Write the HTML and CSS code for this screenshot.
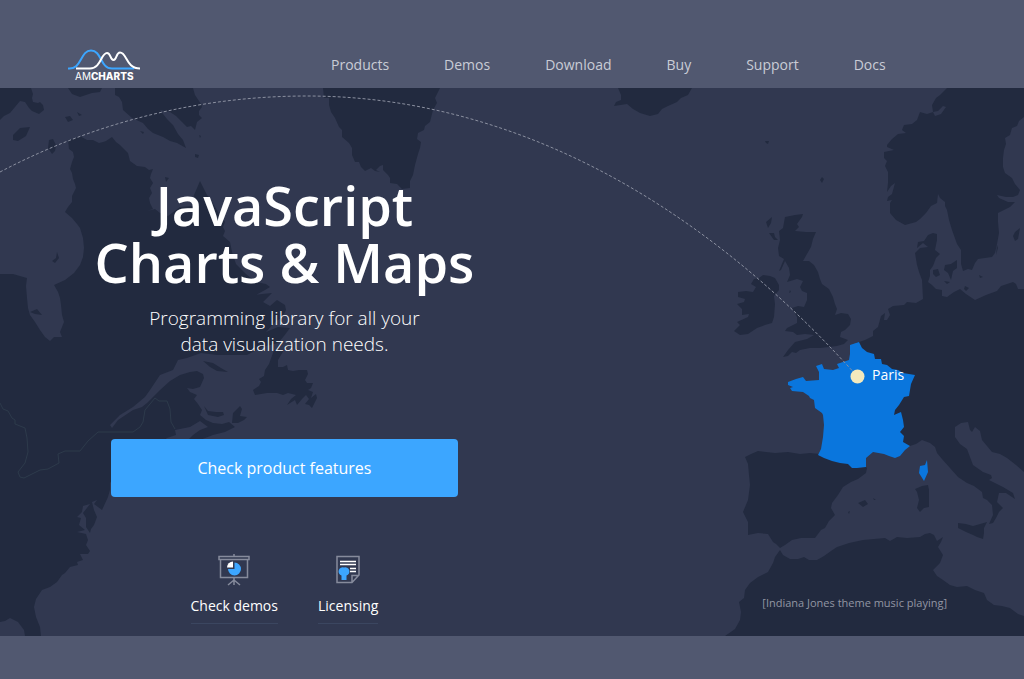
FILE: index.html
```html
<!DOCTYPE html>
<html lang="en">
<head>
  <meta charset="UTF-8">
  <meta name="viewport" content="width=device-width, initial-scale=1.0">
  <title>amCharts: JavaScript Charts &amp; Maps</title>
  <link rel="stylesheet" href="styles.css">
</head>
<body>
  <header class="header">
    <a class="logo" href="#" aria-label="amCharts">
      <svg width="72" height="36" viewBox="68 47 72 36">
        <path class="logo-blue" d="M68 68.500C82 70 80 50.500 91 50.500S100 68.500 112 68.500H134"/>
        <path class="logo-white" d="M76 68.500H90C101 68.500 101 53 107 53C111 53 110 60 113.500 60S116 52.500 120 52.500C127 52.500 126 68.500 140 68.500"/>
        <text x="75" y="80" class="logo-text">AM<tspan class="logo-bold">CHARTS</tspan></text>
      </svg>
    </a>
    <nav class="nav">
      <a href="#">Products</a>
      <a href="#">Demos</a>
      <a href="#">Download</a>
      <a href="#">Buy</a>
      <a href="#">Support</a>
      <a href="#">Docs</a>
    </nav>
  </header>

  <main class="hero">
    <svg class="map" viewBox="0 88 1024 548" preserveAspectRatio="xMidYMid slice">
      <g class="land">
        <!-- Arctic islands -->
        <path d="M0 88H31L33 94L32 98L33 102L38 103L40 102L43 105L44 110L39 114L32 111L29 108L25 102L20 101L15 107L10 113L4 116L0 120Z"/>
        <path d="M13 135L20 128L30 127L26 136L18 141L13 140Z"/>
        <path d="M68 88H102L100 92L92 93L80 97L72 94Z"/>
        <path d="M115 88H193L195 95L201 104L202 107L199 111L199 115L202 118L197 122L195 130L191 126L187 127L182 122L176 116L170 112L160 110L167 119L173 125L178 134L183 140L186 148L177 143L170 141L163 137L153 133L148 129L143 123L132 118L123 110L122 102L119 97L115 95Z"/>
        <path d="M65 117L70 116L73 120L68 122ZM77 112L82 115L79 116ZM49 140L53 139L56 145L55 151L52 154L48 148ZM140 131L144 132L143 134ZM195 154L199 155L198 158L195 157ZM199 135L201 136L200 138ZM165 177L169 178L166 182ZM57 252L59 258L55 263L52 261L56 258Z"/>
        <!-- North America -->
        <path d="M68 140L74 139L80 136L87 140L93 140L99 143L103 142L106 141L112 137L116 142L120 145L128 153L130 161L137 166L145 167L149 170L153 169L151 174L150 178L153 183L150 188L152 193L149 198L150 203L153 209L147 211L155 209L160 213L168 216L180 207L192 206L194 195L200 181L207 195L211 200L218 212L225 222L223 227L225 231L223 236L230 242L232 252L236 264L246 274L256 282L266 284L270 287L265 290L252 297L243 307L245 300L254 295L262 294L272 293L263 302L270 306L277 300L285 305L286 310L282 318L276 321L266 332L278 327L290 328L284 336L278 343L262 347L247 355H217L201 353L187 358L178 360L173 370L160 375L150 390L145 397L133 407L120 415L110 425L112 428L118 420L133 410L142 407L147 403L160 390L170 381L180 375L190 372L197 371L203 374L204 378L200 387L193 389L187 388L190 392L197 395L194 399L198 404L202 410L200 415L206 420L213 423L222 424L229 422L235 427L225 432L213 435L200 440L188 440L193 435L200 430L208 427L200 421L190 427L175 430L176 435L167 438L150 453L130 464L115 474L110 483L110 490L108 497L102 510L98 507L94 504L97 500L92 502L94 510L97 517L94 525L91 529L90 533L86 527L86 518L83 513L90 504L83 506L82 512L77 517L81 518L79 525L85 530L77 532L86 534L88 540L86 545L90 551L88 554L80 554L83 560L77 562L78 565L70 567L65 573L62 575L57 582L50 587L42 590L36 599L34 607L36 617L40 627L41 636H25L24 630L18 622L10 618L5 621L0 622V274L7 274L13 274L20 276L27 278L26 286L27 298L28 308L30 315L35 322L40 330L45 337L50 341L54 337L62 337L60 332L64 322L62 315L61 305L60 298L58 292L54 285L65 280L74 273L80 265L83 257L84 248L83 238L80 228L77 224L72 218L65 212L68 207L72 202L72 196L76 188L75 184L73 179L72 173L70 169L72 162L74 157L73 152L69 149Z"/>
        <path d="M30 312L37 309L42 315L35 314ZM203 361L213 363L221 368L228 372L217 371L210 367ZM204 406L208 411L216 412L223 412L224 415L218 417L208 415ZM240 406L242 409L240 416L247 417L244 420L238 423L232 423L233 413Z"/>
        <!-- Newfoundland -->
        <path d="M274 350L284 350L278 360V367L283 367L287 365L288 370L293 371L299 370L307 370L308 374L305 380L307 383L313 383L311 388L308 390L313 392L311 398L316 394L317 398L315 402L312 408L309 405L305 404L309 399L306 395L302 399L297 405L295 400L287 405L291 399L296 395L288 393L283 395L277 393L267 393L255 395L253 390L259 386L261 382L259 379L264 376L265 370L269 364Z"/>
        <!-- Greenland and Iceland -->
        <path d="M323 88H440L435 98L437 103L433 110L430 122L425 126L424 130L418 133L417 139L421 142L420 148L418 154L415 165L413 175L410 181V188L402 189L397 184L390 183V178L388 175L383 170V165L380 166L376 170L380 172L375 171L371 168L365 171L361 167L359 162L355 162L352 155V148L349 143L342 137V130L339 127L335 118L331 112L329 105V98L324 98Z"/>
        <path d="M618 88H692L688 95L681 98L677 102L668 106L662 109L658 114L650 116L640 113L633 109L627 104L614 106L616 102L621 100L621 95Z"/>
        <path d="M765 141L769 141L768 144L766 143ZM822 177L824 179L822 183L820 180Z"/>
        <!-- Scandinavia -->
        <path d="M947 88H1024V117L1019 121L1017 126L1012 128L1010 135L1005 138L1006 144L1004 150L1003 158L1003 167L1005 173L1012 178L1015 184L1020 190L1018 195L1013 197L1006 197L997 195L999 198L1008 202H1015L1010 207L998 213V222L999 233L997 244L995 253L992 257L978 259L975 263L972 270L968 269L963 271L961 264L961 250L957 244L952 230L949 220L947 210L945 206V202L940 198L938 194L937 203L931 206L926 213L920 219L916 222L905 225L896 220L890 213V203L892 200L887 201L888 197L892 194L895 183L891 186L887 192L888 183L888 172L885 166L887 161L884 158L884 152L894 150L887 147L887 145L892 139L898 134L906 133L902 130L904 125L912 124L917 120L920 112L927 114L933 112L935 116L941 114L946 107L943 106L938 111L933 112L932 105L936 98L940 95Z"/>
        <!-- Mainland Europe -->
        <path d="M933 233L937 234L937 240L935 250L940 254L936 258L933 266L930 270V276L928 282L932 285L936 289L942 290V296L947 297L954 292L960 289L966 294L975 300L986 295L997 291L1001 286L1013 282L1016 284L1018 289L1024 289V472L1016 465L1007 458L1000 454L992 452L987 446L982 440L980 431L975 427L972 432L970 430L968 422L961 423L955 427V437L960 444L967 449L973 465L983 472L991 475L992 478L989 480L1003 487L1013 493L1015 499L1006 493H999L997 502L1003 508L999 512L996 518L993 523L989 524L993 515L992 505L987 500L983 498L982 492L974 486L967 483L958 477L950 468L942 459L937 453L935 447L930 443L922 440L916 444L910 446L895 452L872 448L860 460L867 468L866 473L858 479L851 482L843 487L838 495L832 503L831 508L835 515L829 521L825 528L821 530L815 538L801 538L792 540L785 545L780 548L776 544L773 542L768 534L758 533L748 535V522L743 512L748 500L750 485L749 475L748 464L745 457L751 454L758 451L766 452L775 453L788 452L800 454L810 453L820 454L850 430L858 380L856 343L865 340L873 336L873 331L878 327L881 316L885 313L884 320L887 320L890 315L888 309L893 306L904 305L907 302L916 303L923 299L922 280L919 272L917 265L915 253L920 248L928 247L923 243L917 248L918 242L924 241L928 235Z"/>
        <path d="M933 270L938 269L940 275L936 277L933 274ZM945 265L951 264L957 260V268L953 271L951 280L948 273L944 270ZM944 281L950 282L947 284ZM965 286L969 288L966 291L964 289ZM979 275L983 277L980 278ZM1015 232L1020 228L1018 239L1015 241L1013 236ZM997 245L998 248L996 255Z"/>
        <!-- Britain and Ireland -->
        <path d="M785 217L795 215L803 214L802 217L797 224L799 227L795 231L806 232L816 232L813 239L811 247L807 254L803 261L809 261L814 265L818 272L820 279L822 284L829 289L833 297L835 304L837 309L835 315L841 313L848 314L851 319L850 325L845 330L841 332L840 337L848 340L844 344L837 346L829 347L820 348L810 348L800 350L796 353L792 352L788 356L783 357L788 350L795 342L807 339L814 335L805 334L797 335L793 332L785 331L787 328L797 323L797 317L792 308L798 306L804 307L807 300V293L802 291L800 287L803 281L797 279L787 282L790 275L789 268L785 261L781 270L779 271L784 259L779 256L778 248L780 240L779 231L783 228Z"/>
        <path d="M766 222L772 217L771 223L768 228ZM769 233L774 233L775 237L778 240L774 240ZM763 275L770 276L775 278L779 285L779 290L774 296L775 304L774 317L772 323L765 325L757 328L748 334L740 335L734 331L740 325L737 322L748 317L749 314L742 315V309L737 304L744 302L745 299L738 297V292L746 291L753 292L756 287L751 284L754 279L759 278ZM790 290L791 292L789 293Z"/>
        <!-- Mediterranean islands -->
        <path d="M915 489L922 486L928 485L929 490V507L924 508L920 512L917 508L919 500L917 492ZM858 503L865 500L868 504L863 507ZM848 512L850 511L849 514ZM873 498L876 500L874 500ZM958 523L966 524L973 526L987 522L984 528L984 533L983 539L977 537L973 535L966 532L958 528Z"/>
        <!-- North Africa -->
        <path d="M780 550L783 555L790 559L798 559L804 557L809 560L817 560L824 556L831 551L837 547L849 543L863 540L874 539L885 538L890 541L897 537L907 538L920 537L925 534L930 533L934 535L937 541L943 537L941 542L938 547L943 555L940 563L933 570L937 576L943 580L950 585L957 587L967 586L975 590L984 593L987 600L994 605L1002 606L1010 608L1018 614L1024 616V636H725L735 629L740 620L741 612L739 602L744 598L745 590L750 583L758 577L768 572L773 563L775 557Z"/>
      </g>
      <path class="border" d="M0 403L3 409L8 411L12 418L15 420V424L25 428L27 438L28 452L25 463L18 472L20 477L24 478L40 470L48 469L59 463L58 454L65 451L80 451L88 441L98 432H133L140 427L143 422L145 410L155 398L159 401L167 401L170 409L171 422L175 429"/>
      <g class="france">
        <path d="M850 345L859 342L862 348L867 352L874 354L875 359L881 359L882 364L887 365L892 369L898 370L903 373L915 375L911 384L909 396L904 397L899 405L895 410L894 415L901 412L903 420L904 427L900 432L904 436L903 442L910 446L905 450L900 456L895 458L889 456L884 454L873 452L866 458V467L857 468L852 468L848 464L840 463L832 461L824 458L818 455L821 449L823 437L824 425L823 415L822 413L815 408L814 400L810 398L809 396L803 392L792 391L790 388L793 387L788 385V382L796 379L803 377L806 381L819 380L819 372L816 366L822 364L824 369L833 370L839 368L837 364L849 360L850 354Z"/>
        <path d="M927 460L928 472L924 481L919 473L920 466L925 465Z"/>
      </g>
      <path class="route" d="M0 172C95 122 200 96 307 96C500 96 690 190 857 376"/>
      <circle class="city-dot" cx="857.500" cy="376.500" r="7"/>
      <text class="city" x="872" y="380">Paris</text>
    </svg>

    <section class="intro">
      <h1>JavaScript<br>Charts &amp; Maps</h1>
      <p class="lead">Programming library for all your<br>data visualization needs.</p>
      <a class="cta" href="#">Check product features</a>
      <div class="links">
        <a href="#">
          <svg class="icon" width="32" height="32" viewBox="0 0 32 32">
            <path class="icon-line" d="M1 2.500H31V5.500H1ZM2.500 5.500V23.500H29.500V5.500M16 0V2M16 23.500V31M16 26L10 31M16 26L22 31"/>
            <path fill="#3ca6ff" d="M16.500 8.500A6.500 6.500 0 1 1 10 15H16.500Z"/>
            <path fill="#fff" d="M15 13.500H9A6 6 0 0 1 15 7.500Z"/>
          </svg>
          Check demos
        </a>
        <a href="#">
          <svg class="icon" width="32" height="32" viewBox="0 0 32 32">
            <path class="icon-line" d="M5 2.500H27V21L20 28.500H5ZM26.500 21.500H20V28"/>
            <path stroke="#fff" stroke-width="1.500" d="M8 7.500H24M8 10.500H24M18 14.500H24M18 17.500H24"/>
            <path fill="#3ca6ff" d="M12 13.500A4 4 0 0 1 14.500 21.500V26H9.500V21.500A4 4 0 0 1 12 13.500Z"/>
          </svg>
          Licensing
        </a>
      </div>
    </section>
    <p class="caption">[Indiana Jones theme music playing]</p>
  </main>
</body>
</html>
```

FILE: styles.css
```css
:root {
  --page: #515870;
  --sea: #313850;
  --land: #222a3f;
  --blue: #3ca6ff;
}

* {
  margin: 0;
  padding: 0;
  box-sizing: border-box;
}

body {
  background: var(--page);
  font-family: "Open Sans", "Noto Sans", sans-serif;
  color: #fff;
}

a {
  color: inherit;
  text-decoration: none;
}

.header {
  display: flex;
  align-items: flex-end;
  min-height: 88px;
  padding: 40px 68px 5px;
}

.logo svg {
  display: block;
}

.logo path {
  fill: none;
  stroke-width: 2;
}

.logo .logo-blue {
  stroke: var(--blue);
}

.logo .logo-white {
  stroke: #fff;
}

.logo-text {
  fill: #fff;
  font-family: Inter, sans-serif;
  font-size: 10px;
}

.logo-bold {
  font-weight: 800;
}

.nav {
  display: flex;
  gap: 55px;
  margin-left: 191px;
  padding-bottom: 8px;
  font-size: 14px;
  line-height: 20px;
  color: #c9ccd6;
}

.hero {
  position: relative;
  display: grid;
  grid-template-columns: 5fr 4fr;
  min-height: 548px;
  background: var(--sea);
  overflow: hidden;
}

.map {
  position: absolute;
  inset: 0;
  width: 100%;
  height: 100%;
}

.land {
  fill: var(--land);
}

.border {
  fill: none;
  stroke: #2d3a4b;
}

.france {
  fill: #0a76dd;
}

.route {
  fill: none;
  stroke: #8b90a0;
  stroke-dasharray: 3 2;
}

.city-dot {
  fill: #f3e9bd;
}

.city {
  fill: #fff;
  font-size: 14px;
}

.intro {
  position: relative;
  display: flex;
  flex-direction: column;
  align-items: center;
  padding: 89px 0 11px;
  text-align: center;
}

h1 {
  font-size: 54px;
  font-weight: 600;
  line-height: 57px;
}

.lead {
  margin-top: 14px;
  font-size: 19px;
  font-weight: 300;
  line-height: 26px;
}

.cta {
  width: 61%;
  margin-top: 82px;
  border-radius: 4px;
  background: var(--blue);
  font-size: 16px;
  line-height: 58px;
}

.links {
  display: flex;
  gap: 40px;
  margin-top: 57px;
  font-size: 14px;
  line-height: 20px;
}

.links a {
  display: flex;
  flex-direction: column;
  align-items: center;
  gap: 10px;
  padding-bottom: 7px;
  border-bottom: 1px solid #3b4660;
}

.icon-line {
  fill: none;
  stroke: #868b9c;
  stroke-width: 1.5;
}

.caption {
  position: relative;
  align-self: end;
  justify-self: end;
  padding: 0 77px 25px 0;
  font-size: 11px;
  line-height: 16px;
  color: #9296a3;
}
```
